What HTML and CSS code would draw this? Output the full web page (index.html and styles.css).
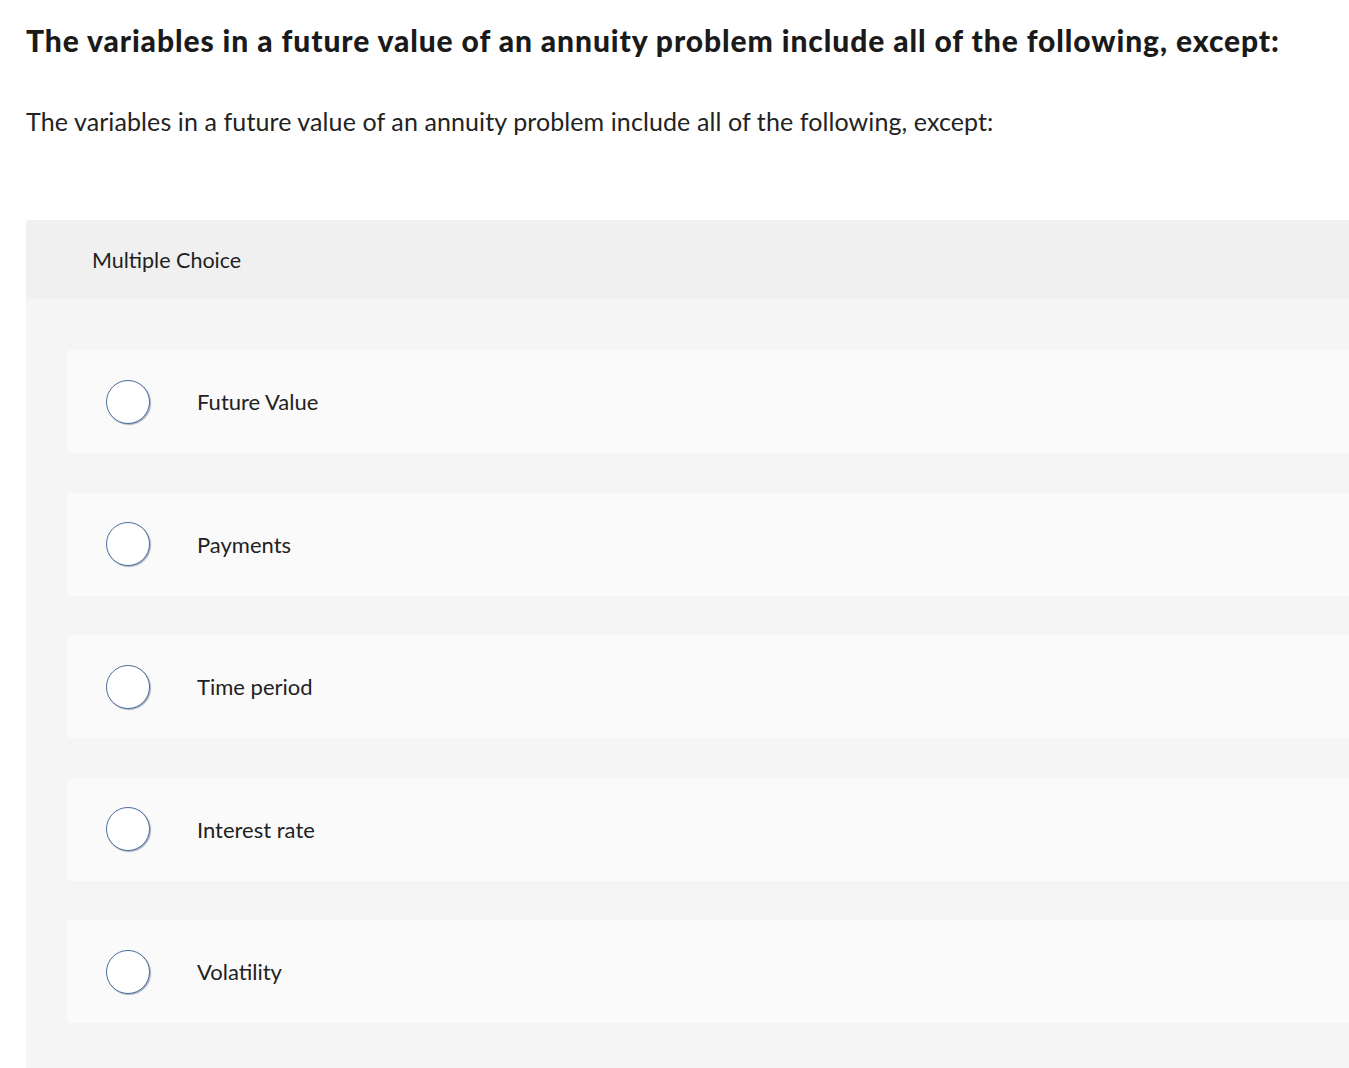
FILE: index.html
```html
<!DOCTYPE html>
<html>
<head>
<link rel="stylesheet" href="styles.css">
</head>
<body>
<h1 class="title">The variables in a future value of an annuity problem include all of the following, except:</h1>
<p class="prompt">The variables in a future value of an annuity problem include all of the following, except:</p>

<div class="question">
  <div class="question-head">Multiple Choice</div>
  <div class="question-body">
    <label class="choice"><span class="radio"></span><span class="choice-text">Future Value</span></label>
    <label class="choice"><span class="radio"></span><span class="choice-text">Payments</span></label>
    <label class="choice"><span class="radio"></span><span class="choice-text">Time period</span></label>
    <label class="choice"><span class="radio"></span><span class="choice-text">Interest rate</span></label>
    <label class="choice"><span class="radio"></span><span class="choice-text">Volatility</span></label>
  </div>
</div>
</body>
</html>
```

FILE: styles.css
```css
body {
    margin: 0;
    padding: 0 0 0 26px;
    background-color: #ffffff;
    font-family: Lato, "Open Sans", Arial, sans-serif;
    color: #1f1f1f;
}

.title {
    margin: 0;
    padding-top: 22px;
    font-size: 30px;
    line-height: 36px;
    font-weight: 900;
    letter-spacing: 0.9px;
    color: #1a1a1a;
}

.prompt {
    margin: 0;
    padding-top: 48px;
    font-size: 25px;
    line-height: 30px;
    letter-spacing: 0.1px;
    color: #232323;
}

.question {
    margin-top: 84px;
    border-radius: 4px 0 0 0;
    overflow: hidden;
}

.question-head {
    height: 79px;
    padding-left: 66px;
    display: flex;
    align-items: center;
    background-color: #f0f0f0;
    font-size: 21.5px;
}

.question-body {
    padding: 51px 0 60px 41px;
    background-color: #f5f5f5;
    display: flex;
    flex-direction: column;
    gap: 39.5px;
}

.choice {
    height: 103px;
    display: flex;
    align-items: center;
    padding-left: 39px;
    background-color: #fafafa;
    border-radius: 4px 0 0 4px;
}

.radio {
    width: 42px;
    height: 42px;
    border: 1px solid #4c6e9c;
    border-radius: 50%;
    background-color: #ffffff;
    box-shadow: 1px 1px 1px rgba(60, 80, 110, 0.45);
    flex-shrink: 0;
}

.choice-text {
    margin-left: 47px;
    font-size: 22px;
    color: #222;
}
```
